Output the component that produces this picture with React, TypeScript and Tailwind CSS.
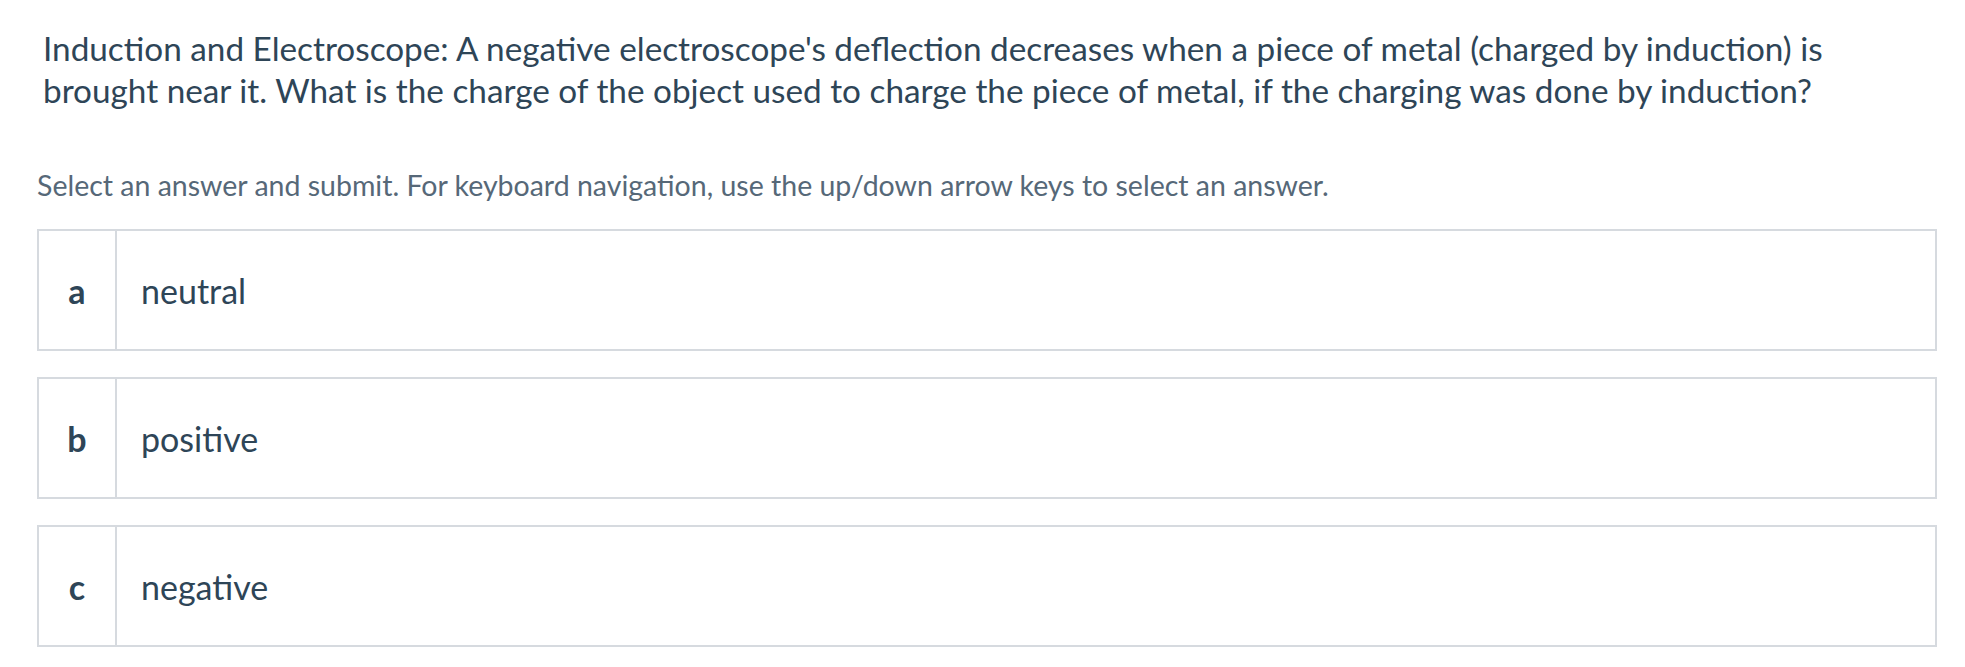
const answers = [
  { key: "a", text: "neutral" },
  { key: "b", text: "positive" },
  { key: "c", text: "negative" },
];

export default function App() {
  return (
    <div className="min-h-screen bg-white pl-[37px] pr-[28px] pt-[27px] font-['Lato',sans-serif]">
      {/* Question */}
      <h1 className="pl-[6px] text-[33.3px] leading-[42px] font-normal text-[#2e4557]">
        Induction and Electroscope: A negative electroscope's deflection decreases when a piece of metal (charged by
        induction) is brought near it. What is the charge of the object used to charge the piece of metal, if the
        charging was done by induction?
      </h1>

      <p className="mt-[56px] text-[28.5px] leading-[36px] text-[#566878]">
        Select an answer and submit. For keyboard navigation, use the up/down arrow keys to select an answer.
      </p>

      {/* Choices */}
      <div className="mt-[26px] flex flex-col gap-[26px]">
        {answers.map((a) => (
          <div key={a.key} className="flex h-[122px] border-2 border-[#d6dadf] bg-white">
            <div className="flex w-[78px] shrink-0 items-center justify-center border-r-2 border-[#d6dadf] text-[34px] font-bold text-[#2e4557]">
              {a.key}
            </div>
            <div className="flex items-center pl-[24px] text-[34px] text-[#2e4557]">{a.text}</div>
          </div>
        ))}
      </div>
    </div>
  );
}
